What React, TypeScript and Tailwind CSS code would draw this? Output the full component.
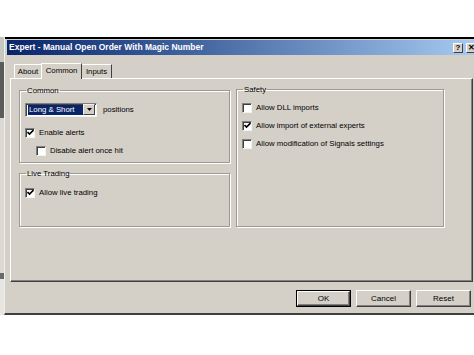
import React from 'react';

const FONT = { fontFamily: '"Liberation Sans", Arial, sans-serif' };

function CheckMark() {
  return (
    <svg width="7" height="7" viewBox="0 0 7 7" className="block">
      <path d="M0.5 3 L2.5 5 L6.5 1" stroke="#000" strokeWidth="1.6" fill="none" />
    </svg>
  );
}

function CheckBox({ checked, label }: { checked?: boolean; label: string }) {
  return (
    <div className="flex items-center gap-[4px] h-[10px]">
      <div className="w-[10px] h-[10px] bg-white border-t border-l border-[#808080] border-r border-b border-r-[#f4f3ef] border-b-[#f4f3ef] shadow-[inset_1px_1px_0_#404040] flex items-center justify-center">
        {checked && <CheckMark />}
      </div>
      <span className="text-[7.8px] leading-none text-black">{label}</span>
    </div>
  );
}

function GroupBox({ title, className, children }: { title: string; className: string; children?: React.ReactNode }) {
  return (
    <fieldset className={`border border-[#9d9a93] shadow-[1px_1px_0_#fff,inset_1px_1px_0_#fff] px-[5px] ${className}`}>
      <legend className="text-[7.8px] leading-none px-[1px] ml-[1px] text-black">{title}</legend>
      {children}
    </fieldset>
  );
}

function Button({ label, def }: { label: string; def?: boolean }) {
  return (
    <div className={`w-[55px] h-[17px] ${def ? 'border border-black' : ''} bg-[#d4d0c8]`}>
      <div className="w-full h-full border-t border-l border-white border-r border-b border-r-[#404040] border-b-[#404040] shadow-[inset_-1px_-1px_0_#808080] flex items-center justify-center text-[8px] text-black">
        {label}
      </div>
    </div>
  );
}

export default function App() {
  return (
    <div className="w-[474px] h-[355px] bg-white overflow-hidden flex flex-col" style={FONT}>
      <div className="h-[37px] shrink-0" />
      <div className="flex h-[278px] shrink-0">
        {/* strip of the window behind */}
        <div className="w-[4px] flex flex-col">
          <div className="h-[25px] bg-[#c8c6c0]" />
          <div className="h-[56px] bg-[#5b5b5b]" />
          <div className="flex-1 bg-[#dcd9d2]" />
          <div className="h-[6px] bg-[#6a6a6a]" />
          <div className="h-[36px] bg-[#e8e6e0]" />
        </div>
        {/* dialog */}
        <div className="flex-1 flex flex-col bg-[#d4d0c8] border-l border-l-[#f0efea] border-b-2 border-b-[#404040] pl-[1px]">
          <div className="h-[2px] bg-black -ml-[1px]" />
          <div className="h-[1px]" />
          <div className="h-[15px] ml-[1px] bg-gradient-to-r from-[#0a246a] to-[#a6caf0] flex items-center pl-[2px]">
            <span className="text-white font-bold text-[8.5px] leading-none flex-1">Expert - Manual Open Order With Magic Number</span>
            <div className="flex gap-[3px] mr-[-2px]">
              <div className="w-[10px] h-[10px] bg-[#d4d0c8] border-t border-l border-white border-r border-b border-r-[#404040] border-b-[#404040] flex items-center justify-center text-[8px] font-bold leading-none">?</div>
              <div className="w-[10px] h-[10px] bg-[#d4d0c8] border-t border-l border-white border-r border-b border-r-[#404040] border-b-[#404040] flex items-center justify-center text-[8px] font-bold leading-none">✕</div>
            </div>
          </div>
          {/* body */}
          <div className="flex-1 flex flex-col pl-[4px] pr-[1px] pt-[7px]">
            {/* tabs */}
            <div className="flex items-end h-[16px] pl-[4px] relative z-10">
              <div className="w-[28px] h-[14px] border-t border-l border-white border-r border-r-[#404040] flex items-center justify-center text-[7.8px] leading-none">About</div>
              <div className="w-[41px] h-[16px] -ml-[1px] bg-[#d4d0c8] border-t border-l border-white border-r border-r-[#404040] flex items-start justify-center pt-[3px] text-[7.8px] leading-none -mb-[1px]">Common</div>
              <div className="w-[30px] h-[14px] border-t border-r border-r-[#404040] border-t-white flex items-center justify-center text-[7.8px] leading-none">Inputs</div>
            </div>
            {/* tab panel */}
            <div className="h-[204px] border-t border-l border-white border-r border-b border-r-[#404040] border-b-[#404040] shadow-[inset_-1px_-1px_0_#808080] flex pl-[8px] pt-[8px] gap-[6px]">
              <div className="flex flex-col gap-[7px]">
                <GroupBox title="Common" className="w-[211px] h-[76px]">
                  <div className="flex items-center gap-[6px] mt-[8px]">
                    <div className="w-[72px] h-[14px] bg-white border-t border-l border-[#808080] border-r border-b border-r-[#f4f3ef] border-b-[#f4f3ef] shadow-[inset_1px_1px_0_#404040] flex items-center p-[1px] pl-[2px]">
                      <div className="flex-1 h-[10px] bg-[#0a246a] text-white text-[7.8px] leading-none flex items-center pl-[1px]">Long &amp; Short</div>
                      <div className="w-[12px] h-[11px] bg-[#d4d0c8] border-t border-l border-[#f0efea] border-r border-b border-r-[#404040] border-b-[#404040] flex items-center justify-center">
                        <svg width="5" height="3" viewBox="0 0 5 3"><path d="M0 0 H5 L2.5 3 Z" fill="#000" /></svg>
                      </div>
                    </div>
                    <span className="text-[7.8px] leading-none">positions</span>
                  </div>
                  <div className="mt-[11px]">
                    <CheckBox checked label="Enable alerts" />
                  </div>
                  <div className="mt-[8px] ml-[11px]">
                    <CheckBox label="Disable alert once hit" />
                  </div>
                </GroupBox>
                <GroupBox title="Live Trading" className="w-[211px] h-[57px]">
                  <div className="mt-[10px]">
                    <CheckBox checked label="Allow live trading" />
                  </div>
                </GroupBox>
              </div>
              <GroupBox title="Safety" className="w-[208px] h-[141px] !mt-[-1px]">
                <div className="flex flex-col gap-[8px] mt-[9px]">
                  <CheckBox label="Allow DLL imports" />
                  <CheckBox checked label="Allow import of external experts" />
                  <CheckBox label="Allow modification of Signals settings" />
                </div>
              </GroupBox>
            </div>
            {/* buttons */}
            <div className="flex justify-end gap-[5px] mt-[8px] pr-[2px]">
              <Button label="OK" def />
              <Button label="Cancel" />
              <Button label="Reset" />
            </div>
          </div>
        </div>
      </div>
      <div className="flex-1" />
    </div>
  );
}
